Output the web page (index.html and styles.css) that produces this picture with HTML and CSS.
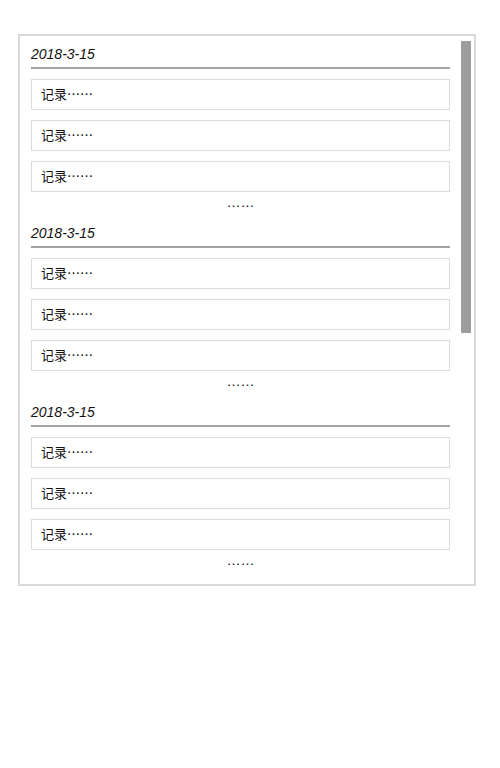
FILE: index.html
```html
<!DOCTYPE html>
<html lang="zh-CN">
<head>
<meta charset="UTF-8" />
<meta name="viewport" content="width=device-width, initial-scale=1" />
<title>记录</title>
<link rel="stylesheet" href="styles.css">
</head>
<body>
<div class="panel">
  <div class="list">
    <div class="day">
      <div class="day-date">2018-3-15</div>
      <div class="entry">记录……</div>
      <div class="entry">记录……</div>
      <div class="entry">记录……</div>
      <div class="more">……</div>
    </div>
    <div class="day">
      <div class="day-date">2018-3-15</div>
      <div class="entry">记录……</div>
      <div class="entry">记录……</div>
      <div class="entry">记录……</div>
      <div class="more">……</div>
    </div>
    <div class="day">
      <div class="day-date">2018-3-15</div>
      <div class="entry">记录……</div>
      <div class="entry">记录……</div>
      <div class="entry">记录……</div>
      <div class="more">……</div>
    </div>
  </div>
  <div class="rail">
    <div class="thumb"></div>
  </div>
</div>
</body>
</html>
```

FILE: styles.css
```css
* {
  box-sizing: border-box;
}

body {
  margin: 0;
  background: #fff;
  color: #111;
  font-family: "Liberation Sans", Arial, "Noto Sans CJK SC", sans-serif;
}

.panel {
  display: flex;
  width: 458px;
  height: 552px;
  margin: 34px 0 0 18px;
  padding: 5px 3px 5px 11px;
  border: 2px solid #d9d9dc;
}

.list {
  flex: 1;
  padding: 4px 11px 0 0;
}

.rail {
  width: 10px;
}

.thumb {
  height: 292px;
  background: #9d9d9d;
}

.day {
  margin-bottom: 13px;
}

.day-date {
  font-size: 14px;
  font-style: italic;
  line-height: 17px;
  padding: 1px 0 4px;
  border-bottom: 2px solid #a3a3a3;
  margin-bottom: 10px;
}

.entry {
  height: 31px;
  margin-bottom: 10px;
  padding: 0 9px;
  border: 1px solid #dcdcdc;
  font-family: "Noto Sans CJK SC", sans-serif;
  font-size: 13px;
  line-height: 28px;
}

.entry:nth-of-type(4) {
  margin-bottom: 0;
}

.more {
  margin-top: 2px;
  text-align: center;
  font-size: 14px;
  line-height: 17px;
}
```
